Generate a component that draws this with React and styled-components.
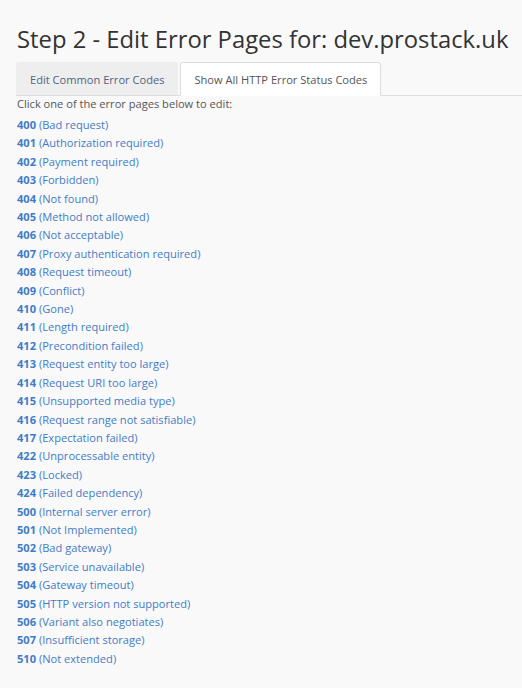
import React from 'react';
import styled, { createGlobalStyle } from 'styled-components';

const GlobalStyle = createGlobalStyle`
    html, body {
        margin: 0;
        padding: 0;
        background: #f9f9f9;
    }
    body {
        font-family: "Open Sans", "Liberation Sans", sans-serif;
        color: #555;
    }
`;

const Page = styled.div`
    padding: 26px 0 20px 16px;
`;

const Title = styled.h2`
    font-size: 23.8px;
    font-weight: 400;
    line-height: 27px;
    color: #333;
    margin: 0 0 9px 1px;
    white-space: nowrap;
`;

const Tabs = styled.ul`
    display: flex;
    list-style: none;
    margin: 0;
    padding: 0;
    border-bottom: 1px solid #ddd;
`;

const Tab = styled.li`
    margin-right: 2px;
    margin-bottom: -1px;
    height: 32px;
    padding: 0 13px;
    display: flex;
    align-items: center;
    font-size: 11.1px;
    border: 1px solid ${p => (p.active ? '#ddd' : 'transparent')};
    border-bottom-color: ${p => (p.active ? 'transparent' : '#ddd')};
    border-radius: 3px 3px 0 0;
    background: ${p => (p.active ? '#fff' : '#eee')};
    color: ${p => (p.active ? '#555' : '#4f6382')};
    cursor: pointer;
`;

const Intro = styled.p`
    font-size: 11.1px;
    line-height: 16px;
    margin: 0 0 4px 1px;
`;

const CodeList = styled.div`
    display: flex;
    flex-direction: column;
    margin-left: 1px;
`;

const CodeLink = styled.a`
    font-size: 11.1px;
    line-height: 18.41px;
    color: #3f7cc7;
    text-decoration: none;
    align-self: flex-start;

    b {
        font-weight: 700;
    }
`;

const codes = [
    ['400', 'Bad request'],
    ['401', 'Authorization required'],
    ['402', 'Payment required'],
    ['403', 'Forbidden'],
    ['404', 'Not found'],
    ['405', 'Method not allowed'],
    ['406', 'Not acceptable'],
    ['407', 'Proxy authentication required'],
    ['408', 'Request timeout'],
    ['409', 'Conflict'],
    ['410', 'Gone'],
    ['411', 'Length required'],
    ['412', 'Precondition failed'],
    ['413', 'Request entity too large'],
    ['414', 'Request URI too large'],
    ['415', 'Unsupported media type'],
    ['416', 'Request range not satisfiable'],
    ['417', 'Expectation failed'],
    ['422', 'Unprocessable entity'],
    ['423', 'Locked'],
    ['424', 'Failed dependency'],
    ['500', 'Internal server error'],
    ['501', 'Not Implemented'],
    ['502', 'Bad gateway'],
    ['503', 'Service unavailable'],
    ['504', 'Gateway timeout'],
    ['505', 'HTTP version not supported'],
    ['506', 'Variant also negotiates'],
    ['507', 'Insufficient storage'],
    ['510', 'Not extended'],
];

export default function App() {
    return (
        <Page>
            <GlobalStyle />
            <Title>Step 2 - Edit Error Pages for: dev.prostack.uk</Title>
            <Tabs>
                <Tab>Edit Common Error Codes</Tab>
                <Tab active>Show All HTTP Error Status Codes</Tab>
            </Tabs>
            <Intro>Click one of the error pages below to edit:</Intro>
            <CodeList>
                {codes.map(([code, label]) => (
                    <CodeLink key={code} href="#">
                        <b>{code}</b> ({label})
                    </CodeLink>
                ))}
            </CodeList>
        </Page>
    );
}
